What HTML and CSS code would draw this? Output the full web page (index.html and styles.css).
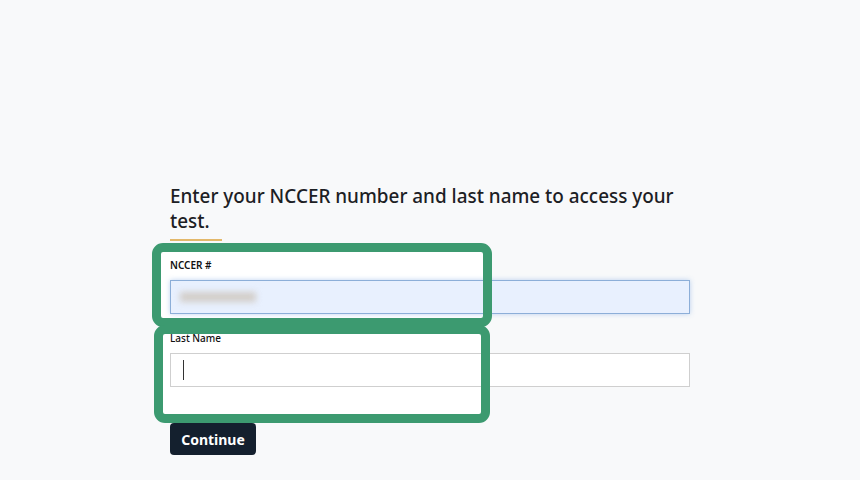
FILE: index.html
```html
<!DOCTYPE html>
<html lang="en">
<head>
<meta charset="utf-8">
<title>Access your test</title>
<link rel="stylesheet" href="styles.css">
</head>
<body>
<div class="stage">
  <div class="mark-fill mark-fill-1"></div>
  <div class="mark-fill mark-fill-2"></div>
  <main class="page">
    <h1 class="title">Enter your NCCER number and last name to access your test.</h1>
    <div class="title-rule"></div>
    <form class="form">
      <div class="field">
        <label class="label label-bold" for="nccer">NCCER #</label>
        <div class="input-wrap">
          <input id="nccer" class="input input-filled" type="text" readonly>
          <span class="blurred"></span>
        </div>
      </div>
      <div class="field">
        <label class="label" for="lname">Last Name</label>
        <div class="input-wrap">
          <input id="lname" class="input" type="text" readonly>
          <span class="caret"></span>
        </div>
      </div>
      <button type="button" class="btn">Continue</button>
    </form>
  </main>
  <div class="mark mark-1"></div>
  <div class="mark mark-2"></div>
</div>
</body>
</html>
```

FILE: styles.css
```css
html, body {
  margin: 0;
  padding: 0;
  background: #f8f9fa;
  font-family: "Noto Sans", "Open Sans", sans-serif;
  color: #212529;
}

.stage {
  position: relative;
  width: 860px;
  height: 480px;
  overflow: hidden;
}

.page {
  position: relative;
  z-index: 1;
  width: 520px;
  margin: 0 auto;
  padding-top: 184px;
}

.title {
  margin: 0;
  font-size: 18.9px;
  line-height: 25px;
  font-weight: 500;
  color: #1c2024;
}

.title-rule {
  width: 52px;
  height: 2px;
  margin-top: 5px;
  background: #e3b86a;
}

.form {
  display: flex;
  flex-direction: column;
  align-items: flex-start;
  margin-top: 17px;
}

.field {
  width: 100%;
  display: flex;
  flex-direction: column;
  gap: 8px;
  margin-bottom: 17px;
}

.field + .field {
  margin-bottom: 36px;
}

.label {
  font-size: 10px;
  line-height: 14px;
  font-weight: 500;
  color: #111;
}

.label-bold {
  font-weight: 600;
}

.input-wrap {
  position: relative;
  height: 34px;
}

.input {
  box-sizing: border-box;
  width: 100%;
  height: 34px;
  margin: 0;
  border: 1px solid #cfcfcf;
  background: #fff;
  outline: none;
  font: inherit;
}

.input-filled {
  background: #e8f0fe;
  border-color: #8caed8;
  box-shadow: 0 0 5px rgba(110, 160, 225, 0.45);
}

.blurred {
  position: absolute;
  left: 10px;
  top: 12px;
  width: 76px;
  height: 10px;
  background: #d2cdc8;
  filter: blur(3px);
}

.caret {
  position: absolute;
  left: 13px;
  top: 7px;
  width: 1px;
  height: 20px;
  background: #333;
}

.btn {
  width: 86px;
  height: 32px;
  border: none;
  border-radius: 4px;
  background: #14202e;
  color: #fff;
  font-family: "Noto Sans", sans-serif;
  font-weight: 700;
  font-size: 14px;
  padding: 0;
}

.mark-fill {
  position: absolute;
  z-index: 0;
  background: #fff;
}

.mark-fill-1 {
  left: 158px;
  top: 249px;
  width: 328px;
  height: 72px;
}

.mark-fill-2 {
  left: 160px;
  top: 331px;
  width: 324px;
  height: 86px;
}

.mark {
  position: absolute;
  z-index: 2;
  border: 9px solid #3c9a70;
  border-radius: 11px;
  box-sizing: border-box;
  pointer-events: none;
}

.mark-1 {
  left: 152px;
  top: 243px;
  width: 340px;
  height: 84px;
}

.mark-2 {
  left: 154px;
  top: 325px;
  width: 336px;
  height: 98px;
}
```
